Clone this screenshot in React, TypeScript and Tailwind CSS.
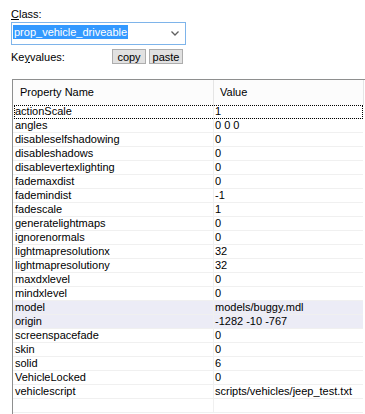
import { useState } from "react";

type Row = { name: string; value: string; tint?: boolean };

const rows: Row[] = [
  { name: "actionScale", value: "1" },
  { name: "angles", value: "0 0 0" },
  { name: "disableselfshadowing", value: "0" },
  { name: "disableshadows", value: "0" },
  { name: "disablevertexlighting", value: "0" },
  { name: "fademaxdist", value: "0" },
  { name: "fademindist", value: "-1" },
  { name: "fadescale", value: "1" },
  { name: "generatelightmaps", value: "0" },
  { name: "ignorenormals", value: "0" },
  { name: "lightmapresolutionx", value: "32" },
  { name: "lightmapresolutiony", value: "32" },
  { name: "maxdxlevel", value: "0" },
  { name: "mindxlevel", value: "0" },
  { name: "model", value: "models/buggy.mdl", tint: true },
  { name: "origin", value: "-1282 -10 -767", tint: true },
  { name: "screenspacefade", value: "0" },
  { name: "skin", value: "0" },
  { name: "solid", value: "6" },
  { name: "VehicleLocked", value: "0" },
  { name: "vehiclescript", value: "scripts/vehicles/jeep_test.txt" },
  { name: "", value: "" },
];

const SmallButton = ({ label }: { label: string }) => (
  <button className="h-[15px] w-[34px] overflow-hidden border border-[#adadad] bg-[#e1e1e1] text-[11px] leading-[12px] text-black">
    {label}
  </button>
);

export default function App() {
  const [selected] = useState(0);

  return (
    <div
      className="w-[365px] h-[414px] overflow-hidden bg-white text-[11px] text-black pt-[7px]"
      style={{ fontFamily: '"Liberation Sans", Arial, sans-serif' }}
    >
      {/* Class */}
      <div className="pl-[11px] h-[14px] leading-[14px]">
        <span className="underline">C</span>lass:
      </div>
      <div className="ml-[11px] mt-[1px] w-[175px] h-[23px] border border-[#7eb4ea] flex items-start justify-between pt-[2px] pl-[1px] pr-[6px]">
        <span className="h-[14px] leading-[14px] bg-[#3399ff] text-white px-[1px]">prop_vehicle_driveable</span>
        <svg width="8" height="5" viewBox="0 0 8 5" className="mt-[6px]">
          <path d="M0.5 0.5 L4 4 L7.5 0.5" fill="none" stroke="#606060" strokeWidth="1.3" />
        </svg>
      </div>

      {/* Keyvalues */}
      <div className="mt-[4px] h-[15px] flex items-center pl-[11px]">
        <span className="w-[101px] leading-[14px] pt-[1px]">
          Ke<span className="underline">y</span>values:
        </span>
        <div className="flex gap-[3px]">
          <SmallButton label="copy" />
          <SmallButton label="paste" />
        </div>
      </div>

      {/* Property table */}
      <div className="mt-[15px] ml-[12px] h-[400px] border-t border-l border-[#8e8f8f]">
        <div className="h-[25px] w-[351px] flex bg-[#fcfcfc] border-r border-[#e5e5e5]">
          <div className="w-[201px] pl-[7px] leading-[25px] border-r border-[#e5e5e5]">Property Name</div>
          <div className="pl-[6px] leading-[25px]">Value</div>
        </div>
        {rows.map((r, i) => (
          <div
            key={i}
            className={`relative h-[14px] w-[350px] flex border-b border-[#f0f0f0] ${r.tint ? "bg-[#ececf6]" : "bg-white"}`}
          >
            <div className="w-[201px] pl-[2px] leading-[13px] border-r border-[#f0f0f0] whitespace-nowrap">{r.name}</div>
            <div className="pl-[1px] leading-[13px] whitespace-nowrap">{r.value}</div>
            {i === selected && (
              <div className="absolute left-[1px] right-0 top-0 bottom-[-1px] border border-dotted border-black" />
            )}
          </div>
        ))}
      </div>
    </div>
  );
}
